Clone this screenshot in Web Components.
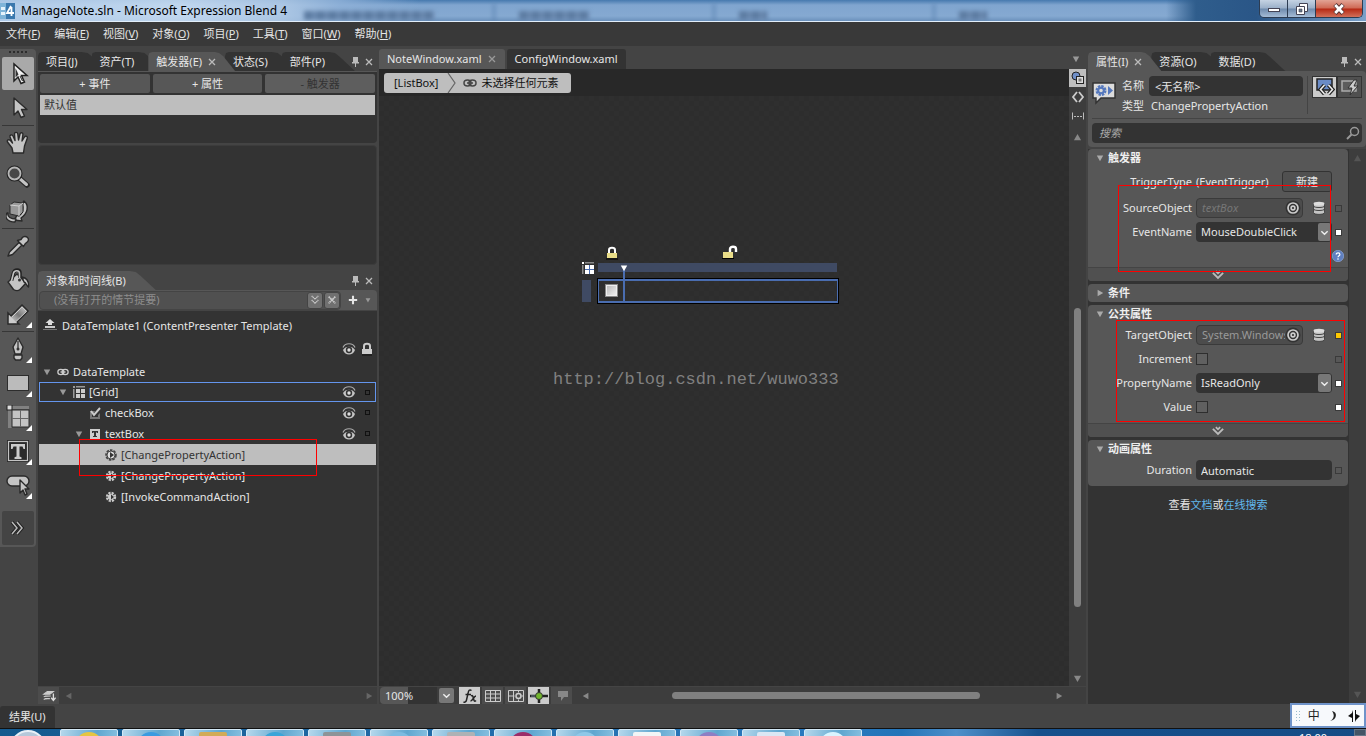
<!DOCTYPE html>
<html lang="zh-CN">
<head>
<meta charset="utf-8">
<title>ManageNote.sln - Microsoft Expression Blend 4</title>
<style>
html, body { margin: 0; height: 100%; }
body { overflow: hidden; background: #444; }
</style>
</head>
<body>
<blend-app></blend-app>
<script>
const BASE = `
*, *::before, *::after { box-sizing: border-box; }
[hidden] { display: none; }
button, input, select { font: inherit; color: inherit; margin: 0; padding: 0; border: 0; background: none; border-radius: 0; outline: none; }
button { display: inline-flex; align-items: center; justify-content: center; }
a { color: inherit; text-decoration: none; }
`;
function define(name, css, html) {
  customElements.define(name, class extends HTMLElement {
    constructor() {
      super();
      this.attachShadow({ mode: 'open' });
    }
    connectedCallback() {
      const t = document.createElement('template');
      t.innerHTML = `<style>${BASE}${css}</style>` + (typeof html === 'function' ? html(this) : html);
      this.shadowRoot.replaceChildren(t.content.cloneNode(true));
    }
  });
}
const at = (el, n, d = '') => el.hasAttribute(n) ? el.getAttribute(n).replace(/</g, '&lt;') : d;

const O = 'stroke="#2a2a2a" stroke-width="1.4" stroke-linejoin="round" fill="#c4c4c4"';
const ICONS = {
  app: [16, `<rect width="15" height="16" fill="#3a78ad"/><rect x="0" width="6" height="16" fill="#7fb4d8"/><path d="M1 4h4v3H1zM1 9h4v3H1z" fill="#e4f2fb"/><path d="M11 3 7 10h7M11.500 4v9" stroke="#fff" stroke-width="1.800" fill="none"/>`],
  select: [24, `<path d="M8 2v17l4-4 3 6.500 3.500-1.500-3-6.500H21z" fill="#f2f2f2" stroke="#222" stroke-width="1.500"/><path d="M9.500 6v9.500l3-3z" fill="#333"/><path d="M14 14l2.500 5" stroke="#222" stroke-width="1"/>`],
  direct: [24, `<path d="M8 2v17l4-4 3 6.500 3.500-1.500-3-6.500H21z" ${O}/>`],
  hand: [24, `<path d="M7 22 6 17 1.500 11c-1-2 1.500-3 3-1.500L6.500 12 4 6C3.500 4 6 3 7 5l2 4.500L8.500 3c0-2.200 3-2.200 3.300 0l.7 6L14 3c.6-2 3.300-1.400 2.900.6L16 10l2.500-4c1.300-1.800 3.500-.5 2.700 1.400L18.500 15 17.500 22z" ${O}/>`],
  zoom: [24, `<path d="m13 13 8 7" stroke="#2a2a2a" stroke-width="5.500" stroke-linecap="round"/><path d="m13 13 7.500 6.500" stroke="#c4c4c4" stroke-width="3" stroke-linecap="round"/><circle cx="8.500" cy="8.500" r="6" fill="#3d3d3d" stroke="#222" stroke-width="4"/><circle cx="8.500" cy="8.500" r="6" fill="#484848" stroke="#b8b8b8" stroke-width="1.800"/>`],
  orbit: [24, `<path d="M18 2c6 5 3 13-3 17l1 3-8-1 4-6 1 2c4-3 5-8 3-12z" ${O}/><path d="M4 6l4-3 9 1v9l-4 4-9-2z" fill="#999" stroke="#2a2a2a"/><path d="M4 6l9 1v10M13 7l4-3" stroke="#d0d0d0" fill="none"/><path d="M2 14c-1 4 3 6 8 6l-1 3c-7 0-11-4-8-9z" ${O}/>`],
  eyedrop: [24, `<path d="M2 22l1.500-4L13 8.500 16 11 6.500 20.500z" ${O}/><path d="m11.500 6.500 6 6 1.500-2.500 1-1c3-2 3-4 1.500-5.500s-4-1.500-5.500.5l-1 1.500z" ${O}/>`],
  bucket: [24, `<path d="M2 14 11 6l9 9-6 6.500c-1.500 1.200-4.500 1.200-6.500 0z" ${O}/><path d="M5.500 12.500 7.500 5C8.500 1 14 1 14 5v5" fill="none" stroke="#222" stroke-width="3.600"/><path d="M5.500 13 7.500 5C8.500 2 13.500 2 13.500 5.500V11" fill="none" stroke="#c4c4c4" stroke-width="1.600"/><circle cx="13.500" cy="12" r="1.500" fill="#333"/><path d="M16 9c5 1 7 5 6.500 10-2-1-2-4-4.500-5z" ${O}/>`],
  gradient: [24, `<defs><linearGradient id="g" x1="0" y1="1" x2="1" y2="0"><stop offset="0" stop-color="#eee"/><stop offset=".5" stop-color="#777"/><stop offset="1" stop-color="#ddd"/></linearGradient></defs><path d="M2 22V11l3 3L16 3l6 6-11 11 2 2z" fill="url(#g)" stroke="#2a2a2a" stroke-width="1.500"/><path d="M3 21v-8l8 8z" fill="#ccc"/><path d="M6 15 16 5l4.500 4.500L10 19.500" fill="none" stroke="#ccc"/>`],
  pen: [24, `<path d="M12 1 7 10l2 7h6l2-7z" ${O}/><path d="M12 4v7" stroke="#333" stroke-width="1.300"/><circle cx="12" cy="12" r="1.500" fill="#333"/><path d="M8 18h8v3l-1.500 2h-5L8 21z" ${O}/>`],
  rect: [24, `<rect x="1" y="4" width="22" height="16" fill="#2d2d2d"/><rect x="2" y="5" width="20" height="14" fill="#bbb"/>`],
  grid: [24, `<path d="M2 1h21v3H6v19H2z" fill="#818181"/><rect x="1" y="0" width="5" height="5" fill="#ddd" stroke="#222"/><rect x="6" y="5" width="17" height="17" fill="#c4c4c4" stroke="#2a2a2a"/><path d="M14.500 5v17M6 13.500h17" stroke="#666"/>`],
  textblock: [24, `<rect x="1" y="1" width="22" height="22" fill="#2b2b2b"/><rect x="2.500" y="2.500" width="19" height="19" fill="none" stroke="#c4c4c4" stroke-width="1.200"/><path d="M5 5h14v5h-1.500l-1-2.500H13.500v10l2 .8V20h-7v-1.700l2-.8v-10H7.500L6.500 10H5z" fill="#ccc"/>`],
  button: [24, `<rect x="1" y="3" width="22" height="10" rx="5" ${O}/><path d="M14 7v13l3-3 2 5 2-1-2-5h4z" ${O}/>`],
  more: [16, `<path d="m2 2 5 6-5 6M7 2l5 6-5 6" stroke="#1f1f1f" stroke-width="3.500" fill="none"/><path d="m2 2 5 6-5 6M7 2l5 6-5 6" stroke="#bbb" stroke-width="1.500" fill="none"/>`],
  x: [10, `<path d="m2 2 6 6M8 2 2 8" stroke="currentColor" stroke-width="1.300"/>`],
  pin: [10, `<path d="M3 0h5v5H9v1.500H6V10H5V6.500H2V5h1z" fill="#bbb"/>`],
  down: [10, `<path d="M1 2h8L5 9z" fill="currentColor"/>`],
  up: [10, `<path d="M1 8h8L5 1z" fill="currentColor"/>`],
  left: [10, `<path d="M8 1v8L1 5z" fill="currentColor"/>`],
  right: [10, `<path d="M2 1v8l7-4z" fill="currentColor"/>`],
  chev: [10, `<path d="m1.500 3.500 3.500 3.500 3.500-3.500" stroke="#eee" stroke-width="1.600" fill="none"/>`],
  expand: [14, `<path d="m1 4.500 6 6 6-6" stroke="#bbb" stroke-width="2.200" fill="none"/><path d="m4.500 2.500 2.500 2.500 2.500-2.500" stroke="#bbb" stroke-width="2" fill="none"/>`],
  dchev: [12, `<path d="m2 1 4 4 4-4M2 6l4 4 4-4" stroke="#ccc" stroke-width="1.500" fill="none" stroke-dasharray="1.500 .5"/>`],
  cross: [12, `<path d="m2 2 8 8M10 2l-8 8" stroke="#ccc" stroke-width="2" stroke-dasharray="2 .6"/>`],
  plus: [12, `<path d="M6 1v10M1 6h10" stroke="#e4e4e4" stroke-width="2.500"/>`],
  eye: [14, `<path d="M1 5.500c2-5 10-5 12 0" fill="none" stroke="#aaa" stroke-width="1.200"/><path d="M1 8c2-4.500 10-4.500 12 0-2 6-10 6-12 0z" fill="#c4c4c4"/><circle cx="7" cy="8" r="3.200" fill="#333"/><circle cx="7" cy="8" r="1.700" fill="#ddd"/>`],
  lock: [14, `<path d="M4 7V4c0-3 6-3 6 0v3" fill="none" stroke="#ccc" stroke-width="2"/><rect x="2" y="7" width="10" height="5" fill="#ccc"/><rect x="2" y="12.500" width="10" height="1" fill="#111"/>`],
  yellowlock: [14, `<path d="M4 7V4c0-3 6-3 6 0v3" fill="none" stroke="#fff" stroke-width="2"/><rect x="2" y="7" width="10" height="5" fill="#e8dc88"/><rect x="1" y="12.500" width="12" height="1" fill="#000"/>`],
  unlock: [18, `<path d="M9 8V5c0-3 6-3 6 0v3" fill="none" stroke="#fff" stroke-width="2.400"/><rect x="2" y="8" width="10" height="6" fill="#e8dc88"/><rect x="1" y="14" width="12" height="1" fill="#000"/>`],
  scope: [14, `<path d="m7 0 4.500 4H9v2H5V4H2.500z" fill="#ddd"/><path d="M2 7h10v2H2z" fill="#ccc"/><path d="M0 10.500h14" stroke="#777"/>`],
  tmpl: [14, `<ellipse cx="4.500" cy="7" rx="3.500" ry="3" fill="none" stroke="currentColor" stroke-width="1.500"/><ellipse cx="9.500" cy="7" rx="3.500" ry="3" fill="none" stroke="currentColor" stroke-width="1.500"/><path d="M4 7h6" stroke="currentColor" stroke-width="1.500"/>`],
  sgrid: [12, `<path d="M0 0h2v2H0zM3 0h9v1.500H3zM0 3h1.500v9H0z" fill="#999"/><path d="M3 3h4v4H3zM8 3h4v4H8zM3 8h4v4H3zM8 8h4v4H8z" fill="#ccc"/>`],
  agrid: [12, `<path d="M3 0h9v1.500H3zM0 3h1.500v9H0z" fill="#888"/><path d="M0 0h2v2H0zM3 3h9v9H3z" fill="#fff"/><path d="M7.500 3v9M3 7.500h9" stroke="#4a6db0"/>`],
  check: [12, `<path d="M1 4h5L5 6H3v4h6V8l2-2v6H1z" fill="#777"/><path d="m2 4 3 4 6-7" stroke="#ccc" stroke-width="2" fill="none"/>`],
  tbox: [12, `<rect x="1" y="1" width="10" height="10" fill="#ccc"/><path d="M3 3h6v2H8L7 4v4h1v1H4V8h1V4L4 5H3z" fill="#333"/>`],
  gear: [12, `<circle cx="6" cy="6" r="3.800" fill="none" stroke="currentColor" stroke-width="2.800" stroke-dasharray="2 1"/><circle cx="6" cy="6" r="3" fill="currentColor"/><path d="m6 3.500 3 2.500-3 2.500z" fill="#333"/>`],
  gearo: [12, `<circle cx="6" cy="6" r="4.800" fill="none" stroke="#444" stroke-width="2" stroke-dasharray="2.500 1"/><circle cx="6" cy="6" r="4" fill="#ddd" stroke="#444"/><path d="M5 3v6l4-3z" fill="#333"/>`],
  comment: [24, `<path d="M1 2h22v15H9l-5 5v-5H1z" fill="#dcdcdc" stroke="#333" stroke-width="1.500"/><circle cx="9" cy="9.500" r="4" fill="none" stroke="#5578bd" stroke-width="3" stroke-dasharray="2.200 .9"/><circle cx="9" cy="9.500" r="2.800" fill="none" stroke="#5578bd" stroke-width="2"/><path d="m16 5 5 4.500-5 4.500z" fill="#5578bd"/>`],
  props: [20, `<path d="M2 2h15v11H2z" fill="#6a8bc7" stroke="#222" stroke-width="1.500"/><path d="m9.500 8-4 4.500 4 4.500M13.500 8l4 4.500-4 4.500" stroke="#222" stroke-width="4" fill="none"/><path d="m9.500 8-4 4.500 4 4.500M13.500 8l4 4.500-4 4.500" stroke="#eee" stroke-width="1.600" fill="none"/>`],
  events: [20, `<path d="M2 4h14v10H2z" fill="#5c5c5c" stroke="#aaa" stroke-width="1.500"/><path d="M14 3 8 11h4l-2 7 8-9h-4l3-6z" fill="#ccc" stroke="#333"/>`],
  search: [14, `<circle cx="8.500" cy="5.500" r="4" fill="none" stroke="#999" stroke-width="1.500"/><path d="M5.500 8.500 1 13" stroke="#999" stroke-width="2"/>`],
  target: [16, `<circle cx="8" cy="8" r="7.500" fill="#333"/><circle cx="8" cy="8" r="5" fill="none" stroke="#ccc" stroke-width="1.700"/><circle cx="8" cy="8" r="1.900" fill="none" stroke="#ccc" stroke-width="1.600"/>`],
  db: [14, `<path d="M1.500 2.500v9c0 2.500 11 2.500 11 0v-9z" fill="#c4c4c4" stroke="#333" stroke-width=".8"/><ellipse cx="7" cy="2.700" rx="5.500" ry="1.900" fill="#ddd"/><path d="M1.500 5c0 2 11 2 11 0M1.500 8c0 2 11 2 11 0" stroke="#444" fill="none"/>`],
  help: [12, `<circle cx="6" cy="6" r="5.700" fill="#5f7fc0" stroke="#8ea8da" stroke-width=".7"/><path d="M4.200 4.500c0-2.300 3.700-2.300 3.700 0C7.900 5.800 6 5.700 6 7.300" stroke="#fff" stroke-width="1.200" fill="none"/><circle cx="6" cy="9" r=".8" fill="#fff"/>`],
  design: [14, `<circle cx="5" cy="5" r="4" fill="#6f8fc8" stroke="#222"/><rect x="5.500" y="5.500" width="7" height="7" fill="#ddd" stroke="#222"/><path d="M7.500 7.500h3v3h-3z" fill="#777"/>`],
  xaml: [14, `<path d="M6 2 2 7l4 5M8 2l4 5-4 5" stroke="#ccc" stroke-width="1.800" fill="none"/>`],
  split: [14, `<path d="M1.500 3.500v7M12.500 3.500v7" stroke="#bbb"/><path d="M3 7.500h9" stroke="#bbb" stroke-dasharray="2 1"/>`],
  layers: [16, `<path d="m2 6 4-3h7l-4 3zM2 9l2-1h6M2 12l2-1h5" fill="#ccc" stroke="#ccc" stroke-width="1.200"/><path d="M13 5v8M10.500 10l2.500 3 2.500-3" stroke="#ddd" stroke-width="1.500" fill="none"/>`],
  fx: [16, `<path d="M9.500 2.500c-2-1.500-3 0-3.500 3L4.500 12c-.5 2-1.500 2.500-3 2M3.500 6.500H9M9 8c1.500-1 2 0 2.500 2.500s1 3.500 2.500 2M14 8c-2 0-3.500 5-5.500 5" stroke="#222" stroke-width="1.500" fill="none"/>`],
  gridon: [16, `<path d="M.5 2.500h15v11H.5zM5.500 2.500v11M10.500 2.500v11M.5 6h15M.5 10h15" stroke="#ccc" fill="none"/>`],
  snap: [16, `<path d="M.5 2.500h15v11H.5zM5.500 2.500v11M.5 8h6" stroke="#ccc" fill="none"/><circle cx="10.500" cy="8" r="2.500" fill="none" stroke="#ccc" stroke-width="1.500"/><path d="M10.500 2.500v2M10.500 11.500v2M13.500 8h2" stroke="#ccc"/>`],
  snapline: [18, `<path d="M0 9h18M9 2v14" stroke="#222" stroke-width="2.500"/><path d="M1 9h6" stroke="#789" stroke-width="1"/><circle cx="9" cy="9" r="3.500" fill="#71b52d" stroke="#333"/>`],
  note: [14, `<path d="M3 2h10v6H9l-3 4V8H3z" fill="#888"/>`],
  min: [14, `<rect x="1.500" y="6.500" width="11" height="3" fill="#fff" stroke="#445"/>`],
  restore: [14, `<path d="M4.500 1.500h8v8h-8z" fill="#fff" stroke="#445"/><path d="M1.500 4.500h8v8h-8z" fill="#fff" stroke="#445"/><path d="M4 7h3v3H4z" fill="#678" stroke="#445" stroke-width=".6"/>`],
  close: [14, `<path d="m3 2.500 8 9M11 2.500l-8 9" stroke="#533" stroke-width="4.500"/><path d="m3.200 3 7.600 8M10.800 3l-7.600 8" stroke="#fff" stroke-width="2.800"/>`],
  moon: [14, `<path d="M6 2c6 1 5 9-2 10 4-2 5-6 2-10z" fill="#222"/>`],
  ime: [14, `<path d="M6 1v12H5V9L1 7l4-3zM8 13V1h1v4l4 2-4 4z" fill="#111"/>`]
};
define('blend-icon', `:host { display: inline-flex; flex: none; } svg { display: block; }`, el => {
  const [box, body] = ICONS[el.getAttribute('name')];
  const s = el.getAttribute('size') || box;
  return `<svg width="${s}" height="${s}" viewBox="0 0 ${box} ${box}" aria-hidden="true">${body}</svg>`;
});
const ic = (n, s) => `<blend-icon name="${n}"${s ? ` size="${s}"` : ''}></blend-icon>`;

define('title-bar', `
:host { display: flex; height: 22px; position: relative; overflow: hidden; font-size: 12px; color: #000;
  background: linear-gradient(#4679ae, #80a5cf 5px, #85a9d1 16px, #6b91bc); border-bottom: 1px solid #e2eefa; }
.glow { position: absolute; inset: 0; background: linear-gradient(90deg, #b9d2ec 0, #cbdff4 180px, #b4cde8 280px, #8fb1d8 340px, transparent 420px); opacity: .85; }
.back { position: absolute; left: 300px; right: 150px; top: 3px; height: 20px; display: grid; grid-template-columns: 195px 220px 220px 1fr; filter: blur(2px); }
.back i { border-right: 2px solid #5c84b3; display: block; padding: 8px 0 0 24px; }
.back i::before { content: ""; display: block; width: 70px; height: 9px; background: repeating-linear-gradient(90deg, #5d7ca2 0 9px, #7190b6 9px 12px); }
.back i:first-child::before { width: 130px; margin-left: -20px; }
.back i:nth-child(3)::before, .back i:nth-child(4)::before { width: 28px; }
.dark { position: absolute; right: 0; top: 0; width: 200px; height: 22px; background: linear-gradient(90deg, transparent, #2f5d8c 30px, #2a5687 90px, #7ba0c8); }
.name { position: relative; display: flex; align-items: center; gap: 5px; flex: 1; font-weight: 400; }
.ctl { position: relative; display: flex; height: 18px; border: 1px solid #2c3c52; border-top: 0; border-radius: 0 0 5px 5px; overflow: hidden; margin-right: 3px; }
.ctl button { width: 28px; background: linear-gradient(#c5d3e3, #9bb0c9 8px, #6f8bad 9px, #a5bcd6); border-right: 1px solid #2c3c52; }
.ctl button:last-child { width: 46px; border: 0; background: linear-gradient(#e2a495, #cf6a55 8px, #b62a15 9px, #d2705a); }
`, `<div class="glow"></div><div class="back"><i></i><i></i><i></i><i></i></div><div class="dark"></div>
<div class="name">${ic('app', 16)}<span>ManageNote.sln - Microsoft Expression Blend 4</span></div>
<div class="ctl"><button aria-label="最小化">${ic('min')}</button><button aria-label="还原">${ic('restore')}</button><button aria-label="关闭">${ic('close')}</button></div>`);

define('menu-bar', `:host { display: flex; align-items: center; gap: 14px; height: 24px; padding-left: 6px; background: #393939; }`,
  [['文件', 'F'], ['编辑', 'E'], ['视图', 'V'], ['对象', 'O'], ['项目', 'P'], ['工具', 'T'], ['窗口', 'W'], ['帮助', 'H']]
    .map(([t, k]) => `<button>${t}(<u>${k}</u>)</button>`).join(''));

define('tool-rail', `
:host { display: flex; flex-direction: column; align-self: start; margin-top: 3px; padding: 0 2px 2px; background: #575757; border-radius: 0 4px 4px 0; }
.grip { height: 8px; background: radial-gradient(circle, #2c2c2c 1px, transparent 1px) 4px 1px / 4px 4px repeat-x; width: 20px; margin-left: 6px; }
button { height: 34px; position: relative; border-radius: 2px; }
button.on { height: 33px; margin-bottom: 1px; background: #a9a9a9; }
hr { width: 100%; height: 1px; margin: 0; border: 0; background: #373737; }
button.fly::after { content: ""; position: absolute; right: 2px; bottom: 3px; border: 3px solid transparent; border-right-color: #fff; border-bottom-color: #fff; }
.more { margin-top: 9px; background: #444; }
`, () => {
  const b = (n, c = '', l = n) => `<button class="${c}" aria-label="${l}">${ic(n)}</button>`;
  return `<div class="grip"></div>${b('select', 'on')}${b('direct')}<hr>${b('hand')}${b('zoom')}${b('orbit')}<hr>${b('eyedrop')}${b('bucket')}${b('gradient', 'fly')}<hr>${b('pen', 'fly')}${b('rect', 'fly')}${b('grid', 'fly')}${b('textblock', 'fly')}${b('button', 'fly')}${b('more', 'more')}`;
});

define('dock-tab', `
:host { display: block; height: 19px; margin-right: -22px; position: relative; }
button { height: 19px; gap: 5px; padding: 0 34px 0 8px; background: #333; white-space: nowrap;
  clip-path: polygon(0 4px, 1px 1px, 4px 0, calc(100% - 30px) 0, calc(100% - 24px) 1px, calc(100% - 19px) 5px, calc(100% - 4px) 100%, 0 100%); }
:host([active]) { z-index: 1; }
:host([active]) button { background: #575757; }
:host([closable]) { margin-right: -12px; }
:host([closable]) button { padding-right: 18px;
  clip-path: polygon(0 4px, 1px 1px, 4px 0, calc(100% - 20px) 0, calc(100% - 16px) 1px, calc(100% - 12px) 4px, 100% 100%, 0 100%); }
blend-icon { color: #bbb; }
`, el => `<button><slot></slot>${el.hasAttribute('closable') ? ic('x') : ''}</button>`);
define('dock-tabs', `
:host { display: flex; height: 19px; gap: 2px; }
.fill { flex: 1; }
.tools { display: flex; align-items: center; gap: 4px; margin-right: 3px; color: #bbb; position: relative; }
.tools button { height: 14px; }
`, `<slot></slot><span class="fill"></span><span class="tools"><button aria-label="自动隐藏">${ic('pin')}</button><button aria-label="关闭">${ic('x')}</button></span>`);

define('trigger-panel', `
:host { display: flex; flex-direction: column; gap: 2px; }
.box { background: #333; border-radius: 0 0 4px 4px; }
.list { height: 72px; padding: 2px; }
.list { border-top: 1px solid #575757; }
.btns { display: grid; grid-template-columns: 1fr 1fr 1fr; gap: 3px; }
.btns button { height: 19px; background: #575757; border-radius: 2px; }
.btns button:disabled { color: #333; background: #5e5e5e; }
.row { margin-top: 2px; height: 20px; padding-left: 4px; line-height: 20px; background: #bebebe; color: #333; }
.detail { height: 120px; border-radius: 4px; border: 1px solid #3c3c3c; }
`, `<div><dock-tabs><dock-tab>项目(J)</dock-tab><dock-tab>资产(T)</dock-tab><dock-tab active closable>触发器(E)</dock-tab><dock-tab>状态(S)</dock-tab><dock-tab>部件(P)</dock-tab></dock-tabs>
<div class="box list"><div class="btns"><button>+ 事件</button><button>+ 属性</button><button disabled>- 触发器</button></div><div class="row">默认值</div></div></div><div class="box detail"></div>`);

define('tree-row', `
:host { display: flex; align-items: center; height: 21px; padding-right: 4px; border: 1px solid transparent; margin: 0 1px; }
:host([focus]) { border-color: #6495ed; height: 20px; }
:host([selected]) { background: #bebebe; color: #333; height: 21px; }
.arrow { width: 14px; display: inline-flex; color: #999; flex: none; }
.ico { width: 16px; display: inline-flex; flex: none; color: #ccc; }
.name { flex: 1; white-space: nowrap; }
.dot { width: 5px; height: 5px; border: 1px solid #111; margin: 0 1px 0 9px; }
`, el => `<span class="arrow" style="margin-left:${3 + 16 * el.getAttribute('level')}px">${el.hasAttribute('open') ? ic('down', 8) : ''}</span>
<span class="ico">${ic(el.getAttribute('icon'), 12)}</span><span class="name"><slot></slot></span>
${el.hasAttribute('eye') ? ic('eye') + '<i class="dot"></i>' : ''}`);

define('objects-panel', `
:host { display: flex; flex-direction: column; flex: 1; min-height: 0; margin-top: 6px; }
.story { display: flex; align-items: center; height: 21px; background: #575757; border-radius: 0 4px 0 0; padding: 1px; border-bottom: 1px solid #444; }
.story .field { width: 302px; display: flex; align-items: center; gap: 1px; height: 19px; border: 1px solid #444; border-radius: 4px; background: #505050; padding-left: 14px; color: #8d8d8d; }
.field span { flex: 1; } .field button { width: 16px; height: 17px; background: #707070; border: 1px solid #444; border-radius: 3px; }
.story > button { margin-left: 7px; color: #999; }
.body { flex: 1; background: #333; position: relative; min-height: 0; overflow: hidden; }
.scope { display: flex; align-items: center; gap: 5px; height: 30px; padding-left: 5px; }
.cols { display: flex; justify-content: flex-end; align-items: center; gap: 4px; height: 16px; padding-right: 3px; margin-bottom: 4px; }
.mark { position: absolute; left: 41px; top: 128px; width: 238px; height: 37px; border: 1px solid #f00; }
.foot { display: flex; align-items: center; justify-content: space-between; height: 18px; color: #666; background: #3d3d3d; padding-right: 4px; border-top: 1px solid #444; }
.foot button { width: 21px; height: 17px; background: #4c4c4c; } .foot .l { display: flex; gap: 6px; align-items: center; }
`, `<dock-tabs><dock-tab active>对象和时间线(B)</dock-tab></dock-tabs>
<div class="story"><div class="field"><span>(没有打开的情节提要)</span><button aria-label="打开情节提要">${ic('dchev', 10)}</button><button aria-label="关闭情节提要">${ic('cross', 10)}</button></div><button aria-label="新建">${ic('plus', 10)}</button><button aria-label="选项">${ic('down', 6)}</button></div>
<div class="body"><div class="scope">${ic('scope')}<span>DataTemplate1 (ContentPresenter Template)</span></div><div class="cols">${ic('eye')}${ic('lock')}</div>
<tree-row level="0" icon="tmpl" open>DataTemplate</tree-row>
<tree-row level="1" icon="sgrid" open focus eye>[Grid]</tree-row>
<tree-row level="2" icon="check" eye>checkBox</tree-row>
<tree-row level="2" icon="tbox" open eye>textBox</tree-row>
<tree-row level="3" icon="gearo" selected>[ChangePropertyAction]</tree-row>
<tree-row level="3" icon="gear">[ChangePropertyAction]</tree-row>
<tree-row level="3" icon="gear">[InvokeCommandAction]</tree-row>
<div class="mark"></div></div>
<div class="foot"><span class="l"><button aria-label="排列顺序">${ic('layers', 14)}</button>${ic('left', 8)}</span>${ic('right', 8)}</div>`);

define('doc-area', `
:host { display: flex; flex-direction: column; min-width: 0; padding-top: 3px; }
.tabs { display: flex; gap: 2px; height: 20px; }
.tabs button { padding: 0 8px; gap: 5px; background: #333; border-radius: 3px 3px 0 0; }
.tabs button.on { background: #575757; } .tabs blend-icon { color: #999; }
.tabs .sp { flex: 1; } .tabs .dd { background: none; padding: 0 6px; }
.mid { flex: 1; display: flex; min-height: 0; }
.view { flex: 1; display: flex; flex-direction: column; min-width: 0; }
.crumbs { height: 27px; background: #282828; padding: 4px 5px; }
.crumb { display: inline-flex; align-items: center; height: 20px; background: #bebebe; color: #111; border-radius: 3px; padding: 0 13px 0 10px; }
.crumb svg { margin: 0 6px 0 9px; } .crumb blend-icon { color: #444; margin-right: 4px; }
.canvas { flex: 1; position: relative; overflow: hidden; background: repeating-conic-gradient(#2d2d2d 0 25%, #2f2f2f 0 50%) 0 0 / 10px 10px; }
.canvas > * { position: absolute; }
.lane { left: 219px; top: 167px; width: 239px; height: 9px; background: #3f4a63; }
.lane2 { left: 203px; top: 184px; width: 9px; height: 22px; background: #3f4a63; }
.frame { left: 219px; top: 183px; width: 240px; height: 24px; border: 2px solid #4a6db0; border-width: 2px 1px; outline: 1px solid #000; }
.split { left: 244px; top: 170px; width: 2px; height: 36px; background: #4a6db0; }
.knob { left: 241px; top: 168px; color: #fff; }
.lk { left: 226px; top: 150px; } .ul { left: 342px; top: 148px; } .gi { left: 203px; top: 166px; }
.cb { left: 226px; top: 188px; width: 13px; height: 13px; margin: 0; appearance: none; border: 2px solid #eee; outline: 1px solid #888; outline-offset: -1px; background: linear-gradient(135deg, #bbb, #eee); }
.wm { left: 174px; top: 273px; font: 17px/22px "Liberation Mono", monospace; color: #808080; }
.side { width: 17px; background: #3d3d3d; display: flex; flex-direction: column; align-items: center; color: #888; padding-bottom: 3px; }
.side button { width: 17px; height: 19px; } .side .on { background: #bebebe; height: 18px; }
.side .up { margin-top: 5px; }
.vtrack { flex: 1; width: 7px; padding: 162px 0 67px; display: flex; } .vtrack i { flex: 1; background: #808080; border-radius: 4px; }
.bar { display: flex; align-items: center; height: 18px; background: #3d3d3d; border-top: 1px solid #444; padding-right: 23px; gap: 2px; }
.zoom { position: relative; display: flex; width: 74px; height: 17px; margin: 0 3px 0 1px; }
.zoom select { appearance: none; width: 100%; padding-left: 5px; background: linear-gradient(90deg, #575757 28px, #333 28px) 0 0 / 57px 100% no-repeat; border-radius: 4px; }
.zoom blend-icon { position: absolute; right: 0; top: 1px; background: #777; padding: 3px; border-radius: 2px; pointer-events: none; }
.bar button { width: 21px; height: 17px; background: #4c4c4c; } .bar .on { background: #ccc; }
.bar .ar { color: #888; margin-left: 8px; } .hs { flex: 1; display: flex; padding: 0 73px 0 80px; } .hs i { flex: 1; height: 7px; background: #808080; border-radius: 4px; }
`, `<div class="tabs"><button class="on">NoteWindow.xaml ${ic('x')}</button><button>ConfigWindow.xaml</button><span class="sp"></span><button class="dd" aria-label="文档列表">${ic('down', 8)}</button></div>
<div class="mid"><div class="view"><div class="crumbs"><div class="crumb">[ListBox]<svg width="10" height="20" viewBox="0 0 10 20"><path d="M1 0l7 10-7 10" fill="none" stroke="#666" stroke-width="1.200"/></svg>${ic('tmpl')}未选择任何元素</div></div>
<div class="canvas"><div class="lane"></div><div class="lane2"></div><div class="frame"></div><div class="split"></div><blend-icon class="knob" name="down" size="8"></blend-icon><blend-icon class="lk" name="yellowlock"></blend-icon><blend-icon class="ul" name="unlock"></blend-icon><blend-icon class="gi" name="agrid"></blend-icon><input class="cb" type="checkbox" aria-label="checkBox"><div class="wm">http://blog.csdn.net/wuwo333</div></div></div>
<div class="side"><button class="on" aria-label="设计">${ic('design')}</button><button aria-label="XAML">${ic('xaml')}</button><button aria-label="拆分">${ic('split')}</button><span class="up">${ic('up', 9)}</span><div class="vtrack"><i></i></div>${ic('down', 9)}</div></div>
<div class="bar"><span class="zoom"><select aria-label="缩放"><option>100%</option></select>${ic('chev', 9)}</span><button class="on" aria-label="效果">${ic('fx')}</button><button aria-label="网格">${ic('gridon')}</button><button aria-label="对齐网格">${ic('snap')}</button><button class="on" aria-label="对齐线">${ic('snapline')}</button><button aria-label="注释">${ic('note')}</button><span class="ar">${ic('left', 8)}</span><span class="hs"><i></i></span><span style="color:#888">${ic('right', 8)}</span></div>`);

define('prop-section', `
:host { display: block; background: #575757; border-radius: 4px; margin-bottom: 3px; position: relative; }
h2 { display: flex; align-items: center; gap: 4px; height: 18px; margin: 0; padding-left: 8px; font-size: 11px; font-weight: 700; color: #eee; }
h2 blend-icon { color: #aaa; }
.foot { width: 100%; height: 14px; border-top: 1px solid #444; background: #505050; border-radius: 0 0 4px 4px; display: flex; }
`, el => `<h2>${ic(el.hasAttribute('closed') ? 'right' : 'down', 8)}${at(el, 'heading')}</h2><slot></slot>${el.hasAttribute('more') ? `<button class="foot" aria-label="显示高级属性">${ic('expand', 12)}</button>` : ''}`);

define('prop-field', `
:host { display: grid; grid-template-columns: 104px 1fr 16px; align-items: center; height: 24px; }
label { text-align: right; white-space: nowrap; }
.c { display: flex; align-items: center; margin-left: 4px; min-width: 0; position: relative; }
.box { width: 100%; height: 20px; background: #333; border-radius: 4px; padding-left: 5px; }
select.box { appearance: none; }
.pick { width: 107px; display: flex; height: 20px; align-items: center; border: 1px solid #3a3a3a; border-radius: 4px; background: #4c4c4c; color: #999; padding-right: 1px; }
.pick input { flex: 1; min-width: 0; padding-left: 5px; } .pick input::placeholder { color: #777; font-style: italic; opacity: 1; }
.db { margin-left: 9px; }
.chk { appearance: none; width: 12px; height: 12px; border: 1px solid #2e2e2e; background: #606060; }
.chev { position: absolute; right: 1px; background: #777; padding: 5px 2px; height: 18px; border-radius: 2px; pointer-events: none; }
.m { width: 7px; height: 7px; margin-left: 3px; border: 1px solid #3a3a3a; }
.m.w { background: #fff; } .m.y { background: #ffc800; }
:host([kind=trigger]) { height: 29px; }
.new { width: 50px; height: 21px; border: 1px solid #333; border-radius: 3px; margin-left: auto; background: #505050; }
`, el => {
  const k = el.getAttribute('kind'), v = at(el, 'value');
  let c;
  if (k === 'trigger') c = `<output id="f">${v}</output><button class="new">新建</button>`;
  if (k === 'pick') c = `<span class="pick"><input id="f" value="${v}" placeholder="${at(el, 'hint')}">${ic('target')}</span><button class="db" aria-label="数据绑定">${ic('db')}</button>`;
  if (k === 'select') c = `<select id="f" class="box"><option>${v}</option></select><blend-icon class="chev" name="chev" size="9"></blend-icon>`;
  if (k === 'check') c = `<input id="f" class="chk" type="checkbox">`;
  if (k === 'text') c = `<input id="f" class="box" value="${v}">`;
  return `<label for="f">${at(el, 'label')}</label><span class="c">${c}</span>${k === 'trigger' ? '' : `<i class="m ${at(el, 'mark')}"></i>`}`;
});

define('props-panel', `
:host { display: flex; flex-direction: column; min-height: 0; padding-top: 6px; }
.head { background: #575757; border-radius: 0 4px 4px 4px; padding: 5px 4px 4px; height: 76px; margin-bottom: 2px; }
.top { display: grid; grid-template-columns: 26px 23px 1fr auto; column-gap: 4px; border-bottom: 1px solid #444; height: 43px; grid-template-rows: 20px 20px; align-items: center; }
.ci { grid-row: 1 / 3; align-self: start; margin-top: 5px; }
.top input { grid-column: 3; height: 20px; min-width: 0; background: #333; border-radius: 4px; padding-left: 6px; }
.type { padding-left: 2px; }
.modes { grid-column: 4; grid-row: 1 / 3; align-self: start; display: flex; border-left: 1px solid #444; height: 38px; padding-left: 4px; align-items: start; }
.modes button { width: 25px; height: 22px; background: #505050; border: 1px solid #333; } .modes .on { background: #ccc; }
.search { display: flex; align-items: center; height: 20px; margin-top: 4px; background: #333; border-radius: 4px; padding: 0 2px 0 7px; } .search input { flex: 1; font-style: italic; } .search input::placeholder { color: #aaa; opacity: 1; }
.scroll { display: flex; flex: 1; min-height: 0; background: #333; }
.list { flex: 1; min-width: 0; } .sb { width: 17px; margin-left: 1px; background: #3d3d3d; display: flex; flex-direction: column; justify-content: space-between; align-items: center; padding: 5px 0; color: #555; }
.help { display: flex; justify-content: flex-end; align-items: center; height: 23px; padding-right: 4px; }
.mark { position: absolute; border: 1px solid #f00; pointer-events: none; }
.m1 { left: 30px; top: 36px; width: 213px; height: 87px; } .m2 { left: 28px; top: 15px; width: 229px; height: 102px; }
.pad { height: 4px; }
p { margin: 11px 0; text-align: center; line-height: 16px; } p a { color: #62b9ee; }
`, `<dock-tabs><dock-tab active closable>属性(I)</dock-tab><dock-tab>资源(O)</dock-tab><dock-tab>数据(D)</dock-tab></dock-tabs>
<div class="head"><div class="top"><span class="ci">${ic('comment')}</span><label for="n">名称</label><input id="n" value="&lt;无名称&gt;"><span>类型</span><span class="type">ChangePropertyAction</span><span class="modes"><button class="on" aria-label="属性">${ic('props')}</button><button aria-label="事件">${ic('events')}</button></span></div>
<div class="search"><input aria-label="搜索" placeholder="搜索">${ic('search')}</div></div>
<div class="scroll"><div class="list">
<prop-section heading="触发器" more><prop-field kind="trigger" label="TriggerType" value="(EventTrigger)"></prop-field><prop-field kind="pick" label="SourceObject" hint="textBox"></prop-field><prop-field kind="select" label="EventName" value="MouseDoubleClick" mark="w"></prop-field><div class="help">${ic('help')}</div><div class="mark m1"></div></prop-section>
<prop-section heading="条件" closed></prop-section>
<prop-section heading="公共属性" more><prop-field kind="pick" label="TargetObject" value="System.Windows" mark="y"></prop-field><prop-field kind="check" label="Increment"></prop-field><prop-field kind="select" label="PropertyName" value="IsReadOnly" mark="w"></prop-field><prop-field kind="check" label="Value" mark="w"></prop-field><div class="pad"></div><div class="mark m2"></div></prop-section>
<prop-section heading="动画属性"><prop-field kind="text" label="Duration" value="Automatic"></prop-field><div class="pad"></div></prop-section>
<p>查看<a href="#docs">文档</a>或<a href="#online">在线搜索</a></p></div>
<div class="sb">${ic('up', 9)}${ic('down', 9)}</div></div>`);

define('results-bar', `
:host { display: flex; height: 24px; position: relative; padding-top: 2px; }
button { height: 22px; padding: 0 9px; background: #333; border-radius: 3px 3px 0 0; }
.ime { position: absolute; right: 0; top: -1px; height: 25px; width: 76px; background: #f7f9fc; border: 2px solid #6f93c9; display: flex; align-items: center; justify-content: space-around; color: #222; z-index: 2; font-size: 12px; }
.grip { width: 6px; height: 12px; background: radial-gradient(circle, #9bc 1px, transparent 1px) 0 0 / 3px 3px; }
`, `<button>结果(U)</button><div class="ime"><i class="grip"></i><span>中</span>${ic('moon')}${ic('ime')}</div>`);

define('task-bar', `
:host { display: flex; height: 8px; overflow: hidden; border-top: 1px solid #111; background: linear-gradient(90deg, #155a8e, #2a7abf 60%, #2474b8 66%, #4f90ca 70%, #17508c 76%, #164c85); gap: 4px; }
.orb { width: 56px; } .orb::before { content: ""; display: block; margin: 1px auto; width: 36px; height: 36px; border-radius: 50%; background: #b5c8da; border: 2px solid #e8f0f7; }
.t { width: 58px; height: 30px; border: 1px solid #d3e8f5; border-radius: 2px; background: linear-gradient(100deg, #b5d8ec, #5fa6cf 60%, #8cc3e2); display: flex; justify-content: center; }
.t::before { content: ""; width: 28px; height: 28px; margin-top: 2px; border-radius: var(--r, 50%); background: var(--c); }
.clock { margin-left: auto; margin-right: 23px; color: #fff; padding-top: 1px; line-height: 16px; } .desk { width: 12px; border: 1px solid #678; background: #456; }
`, () => `<span class="orb"></span>` + ['#e5c542', '#3b9be0', '#d2ab58', '#3ba5d8', '#8d9498', '#7cbbe0', '#aeb2b5', '#9b2d69', '#8fc8e8', '#f2f5f6', '#8d7fc4', '#dbe7f4', '#d9f4ff'].map((c, i) => `<span class="t" style="--c:${c};--r:${[2, 4, 6, 9, 11].includes(i) ? '2px' : '50%'}"></span>`).join('') + `<span class="clock">18:00</span><span class="desk"></span>`);

define('blend-app', `
:host { display: flex; flex-direction: column; height: 100vh; background: #444; color: #e6e6e6; font: 11px/16px "Noto Sans", "Noto Sans CJK SC", sans-serif; }
main { flex: 1; min-height: 0; display: grid; grid-template-columns: 36px 339px minmax(0, 1fr) 278px; grid-template-rows: minmax(0, 1fr); column-gap: 2px; }
.left { display: flex; flex-direction: column; padding-top: 6px; min-height: 0; }
`, `<title-bar></title-bar><menu-bar></menu-bar><main><tool-rail></tool-rail><div class="left"><trigger-panel></trigger-panel><objects-panel></objects-panel></div><doc-area></doc-area><props-panel></props-panel></main><results-bar></results-bar><task-bar></task-bar>`);
</script>
</body>
</html>
